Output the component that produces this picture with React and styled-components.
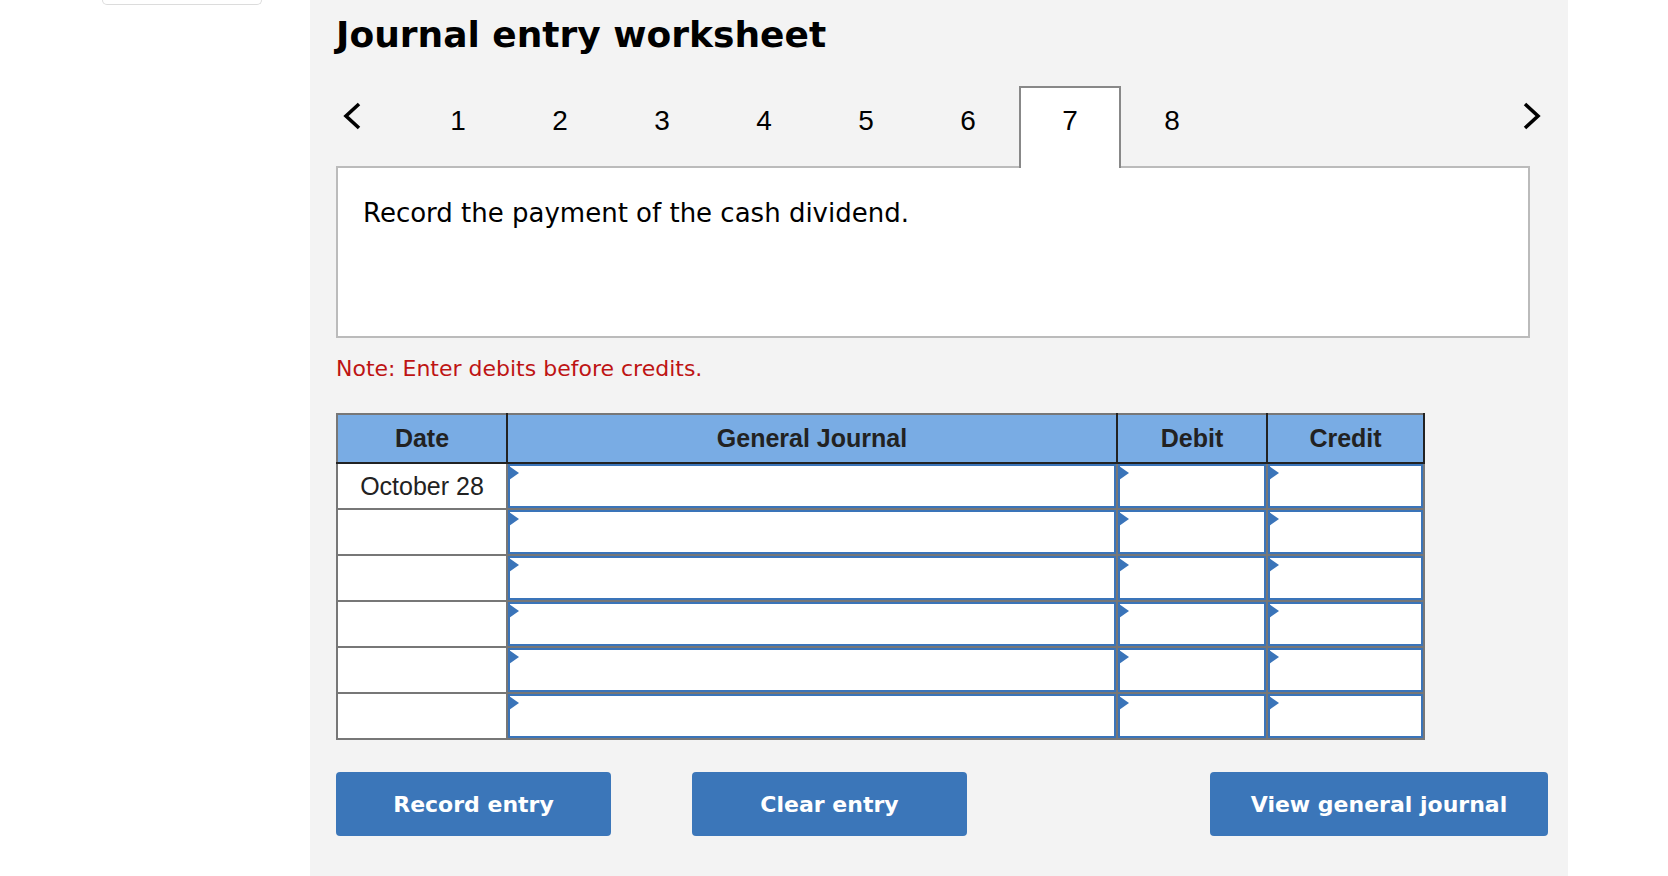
import React from 'react';
import styled, { createGlobalStyle } from 'styled-components';

const GlobalStyle = createGlobalStyle`
  body {
    margin: 0;
    background: #fff;
  }
`;

const Page = styled.div`
  display: flex;
  min-height: 100vh;
`;

const Sidebar = styled.aside`
  width: 310px;
  flex-shrink: 0;
`;

const SideTab = styled.div`
  margin-left: 102px;
  width: 158px;
  height: 4px;
  border: 1px solid #dcdcdc;
  border-top: none;
  border-radius: 0 0 8px 8px;
`;

const Panel = styled.main`
  width: 1258px;
  box-sizing: border-box;
  padding: 14px 20px 40px 26px;
  background: #f3f3f3;
`;

const Title = styled.h1`
  margin: 0;
  font-family: 'DejaVu Sans', Verdana, sans-serif;
  font-size: 36px;
  font-weight: bold;
  line-height: 42px;
  color: #000;
`;

const Nav = styled.nav`
  display: flex;
  height: 82px;
  margin-top: 30px;
  margin-bottom: -2px;
  position: relative;
  z-index: 1;
`;

const Arrow = styled.button`
  width: 32px;
  height: 28px;
  margin-top: 16px;
  padding: 0;
  border: none;
  background: none;
  display: flex;
  justify-content: center;
  cursor: pointer;
`;

const TabList = styled.div`
  display: flex;
  margin-left: 39px;
  flex: 1;
`;

const Tab = styled.div`
  width: 102px;
  box-sizing: border-box;
  padding-top: 17px;
  text-align: center;
  font-family: 'Liberation Sans', Arial, sans-serif;
  font-size: 28px;
  line-height: 32px;
  color: #000;
  border: 2px solid ${(p) => (p.active ? '#888' : 'transparent')};
  border-bottom: none;
  background: ${(p) => (p.active ? '#fff' : 'transparent')};
`;

const Prompt = styled.div`
  width: 1194px;
  height: 172px;
  box-sizing: border-box;
  padding: 30px 25px;
  border: 2px solid #bbb;
  background: #fff;
  font-family: 'DejaVu Sans', Verdana, sans-serif;
  font-size: 26px;
  line-height: 1.2;
  color: #000;
`;

const Note = styled.p`
  margin: 18px 0 0;
  font-family: 'DejaVu Sans', Verdana, sans-serif;
  font-size: 22px;
  line-height: 26px;
  color: #be1414;
`;

const Table = styled.table`
  margin-top: 31px;
  width: 1087px;
  table-layout: fixed;
  border-collapse: collapse;
  border: 2px solid #777;
  font-family: 'Liberation Sans', Arial, sans-serif;
`;

const Head = styled.th`
  height: 47px;
  padding: 0;
  background: #79ace4;
  border: 2px solid #777;
  border-right-color: #222;
  border-bottom-color: #222;
  font-size: 25px;
  font-weight: bold;
  color: #222;
  text-align: center;
`;

const Cell = styled.td`
  height: 44px;
  padding: 0;
  border: 2px solid #777;
  background: #fff;
  font-size: 25px;
  color: #222;
  text-align: center;
  vertical-align: middle;
`;

const Field = styled.div`
  position: relative;
  height: 44px;
  box-sizing: border-box;
  border: 2px solid #3a74b9;
  background: #fff;

  &::before {
    content: '';
    position: absolute;
    top: 0;
    left: -1px;
    border-top: 7px solid transparent;
    border-bottom: 7px solid transparent;
    border-left: 10px solid #3a74b9;
  }
`;

const Actions = styled.div`
  display: flex;
  margin-top: 32px;
`;

const Button = styled.button`
  width: ${(p) => p.width}px;
  height: 64px;
  margin-left: ${(p) => p.gap || '0'};
  padding: 0;
  border: none;
  border-radius: 4px;
  background: #3b76b9;
  color: #fff;
  font-family: 'DejaVu Sans', Verdana, sans-serif;
  font-size: 22px;
  font-weight: bold;
  cursor: pointer;
`;

const Chevron = ({ dir }) => (
  <svg width="22" height="28" viewBox="0 0 22 28">
    <polyline
      points={dir === 'left' ? '18,2 5,14 18,26' : '4,2 17,14 4,26'}
      fill="none"
      stroke="#000"
      strokeWidth="3.6"
    />
  </svg>
);

const rows = ['October 28', '', '', '', '', ''];

export default function App() {
  return (
    <Page>
      <GlobalStyle />
      <Sidebar>
        <SideTab />
      </Sidebar>
      <Panel>
        <Title>Journal entry worksheet</Title>

        <Nav>
          <Arrow aria-label="previous">
            <Chevron dir="left" />
          </Arrow>
          <TabList>
            {[1, 2, 3, 4, 5, 6, 7, 8].map((n) => (
              <Tab key={n} active={n === 7}>{n}</Tab>
            ))}
          </TabList>
          <Arrow aria-label="next">
            <Chevron dir="right" />
          </Arrow>
        </Nav>

        <Prompt>Record the payment of the cash dividend.</Prompt>

        <Note>Note: Enter debits before credits.</Note>

        <Table>
          <colgroup>
            <col style={{ width: 170 }} />
            <col style={{ width: 610 }} />
            <col style={{ width: 150 }} />
            <col style={{ width: 157 }} />
          </colgroup>
          <thead>
            <tr>
              <Head>Date</Head>
              <Head>General Journal</Head>
              <Head>Debit</Head>
              <Head>Credit</Head>
            </tr>
          </thead>
          <tbody>
            {rows.map((date, i) => (
              <tr key={i}>
                <Cell>{date}</Cell>
                <Cell><Field /></Cell>
                <Cell><Field /></Cell>
                <Cell><Field /></Cell>
              </tr>
            ))}
          </tbody>
        </Table>

        <Actions>
          <Button width={275}>Record entry</Button>
          <Button width={275} gap="81px">Clear entry</Button>
          <Button width={338} gap="auto">View general journal</Button>
        </Actions>
      </Panel>
    </Page>
  );
}
